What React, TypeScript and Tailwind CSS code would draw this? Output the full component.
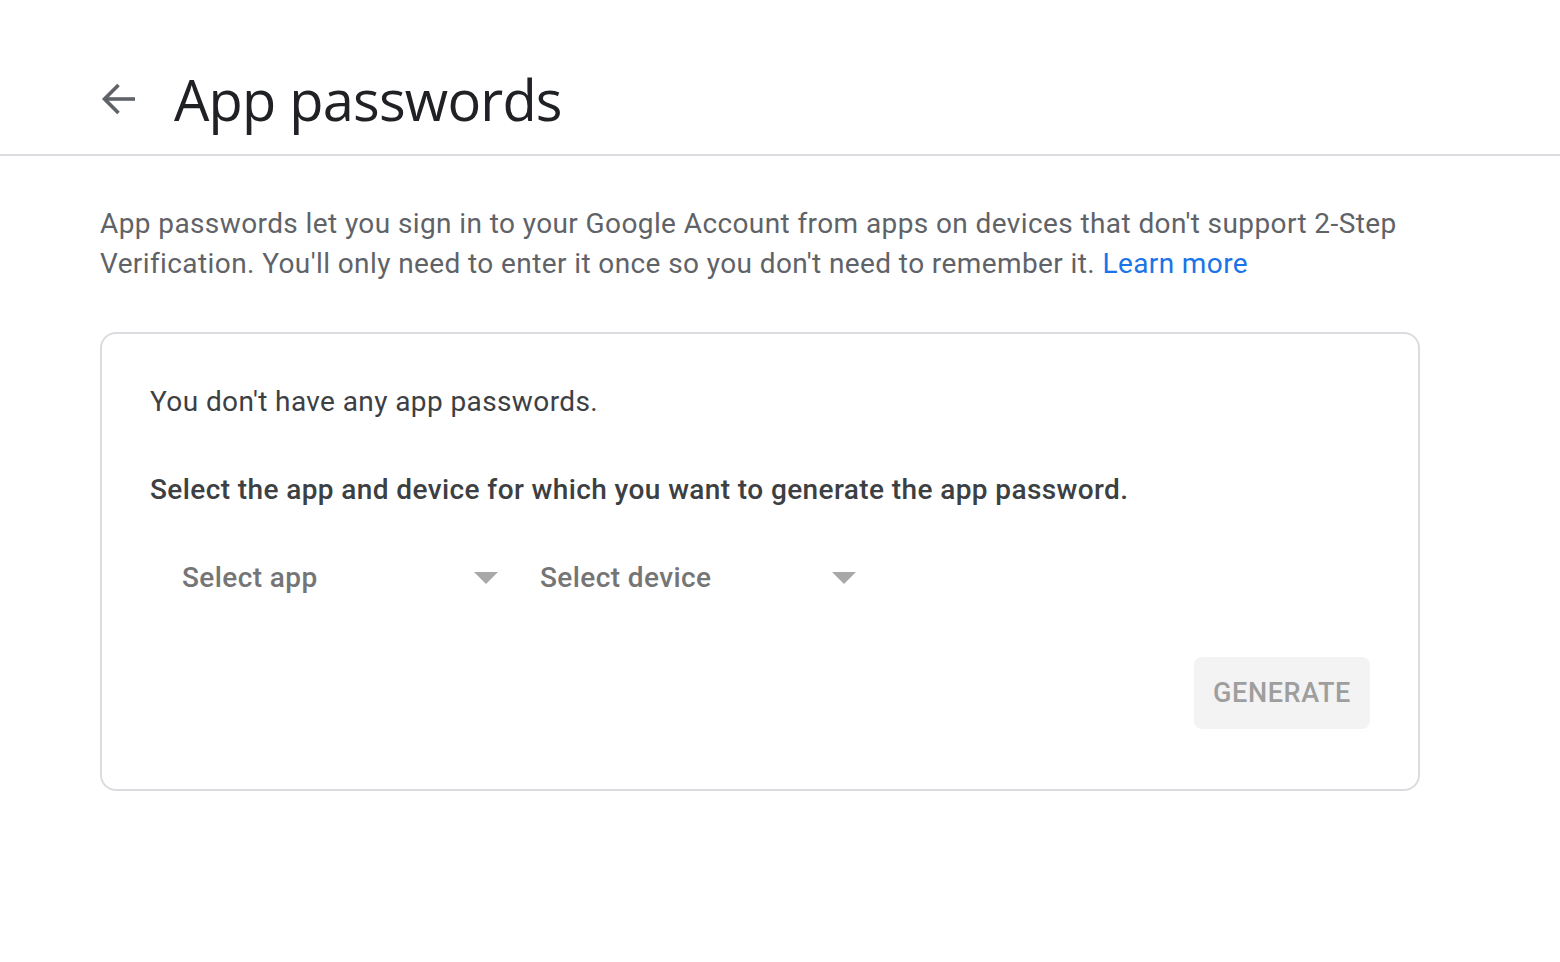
import React from 'react';

const ArrowBack: React.FC = () => (
  <svg width="36" height="34" viewBox="0 0 36 34" fill="none" stroke="#5f6368" strokeWidth="3.6">
    <path d="M35 17H4" />
    <path d="M18.5 3 4.5 17l14 14" />
  </svg>
);

const Caret: React.FC = () => (
  <svg width="24" height="12" viewBox="0 0 24 12">
    <path fill="#a8a8a8" d="M0 0h24L12 12z" />
  </svg>
);

const SelectBox: React.FC<{ label: string }> = ({ label }) => (
  <div className="flex w-[358px] items-center justify-between pl-8 pr-[10px]">
    <span className="text-[28px] font-medium tracking-[0.4px] text-[#757575]">{label}</span>
    <Caret />
  </div>
);

export default function App() {
  return (
    <div className="min-h-screen bg-white font-['Roboto',sans-serif]">
      {/* header */}
      <div className="flex h-[156px] items-center gap-[38px] border-b-2 border-[#dadce0] pl-[100px] pt-[44px]">
        <ArrowBack />
        <h1 className="font-['Open_Sans',sans-serif] text-[56px] leading-none tracking-[-0.8px] text-[#202124]">
          App passwords
        </h1>
      </div>

      <div className="pl-[100px] pr-[140px]">
        <p className="mt-[48px] max-w-[1320px] text-[28px] leading-[40px] tracking-[0.4px] text-[#5f6368]">
          App passwords let you sign in to your Google Account from apps on devices that don't support 2-Step
          Verification. You'll only need to enter it once so you don't need to remember it.{' '}
          <a className="text-[#1a73e8]">Learn more</a>
        </p>

        <div className="mt-[48px] w-[1320px] rounded-2xl border-2 border-[#dadce0] px-[48px] pt-[50px] pb-[60px]">
          <p className="text-[28px] leading-[36px] tracking-[0.4px] text-[#3c4043]">You don't have any app passwords.</p>
          <p className="mt-[52px] text-[28px] font-medium leading-[36px] tracking-[0.4px] text-[#3c4043]">
            Select the app and device for which you want to generate the app password.
          </p>
          <div className="mt-[49px] flex">
            <SelectBox label="Select app" />
            <SelectBox label="Select device" />
          </div>
          <div className="mt-[58px] flex justify-end">
            <button className="h-[72px] w-[176px] rounded-lg bg-[#f3f3f3] text-[27px] font-medium tracking-[0.6px] text-[#9e9e9e]">
              GENERATE
            </button>
          </div>
        </div>
      </div>
    </div>
  );
}
